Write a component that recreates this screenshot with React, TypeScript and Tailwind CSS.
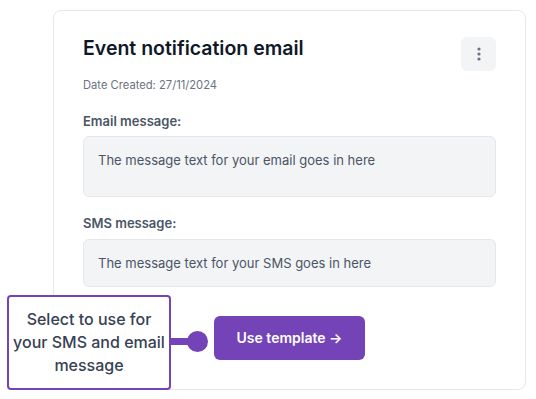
import React from 'react';

const font = { fontFamily: 'Inter, "Noto Sans", sans-serif' };

function KebabIcon() {
  return (
    <svg width="4" height="14" viewBox="0 0 4 14" fill="#6b7280">
      <circle cx="2" cy="2" r="1.6" />
      <circle cx="2" cy="7" r="1.6" />
      <circle cx="2" cy="12" r="1.6" />
    </svg>
  );
}

export default function App() {
  return (
    <div className="relative w-[536px] h-[399px] bg-white pt-[10px] pl-[53px]" style={font}>
      {/* Template card */}
      <div className="w-[473px] h-[380px] border border-gray-200 rounded-lg bg-white px-[29px] pt-[25px]">
        <div className="flex items-start justify-between">
          <h2 className="text-[19.5px] leading-6 font-semibold text-gray-900">Event notification email</h2>
          <button className="mt-px w-[35px] h-[34px] rounded-md bg-gray-100 flex items-center justify-center">
            <KebabIcon />
          </button>
        </div>
        <p className="mt-[6px] text-[11.2px] leading-4 text-gray-500">Date Created: 27/11/2024</p>

        <p className="mt-[18px] text-[13px] leading-5 font-semibold text-gray-600">Email message:</p>
        <div className="mt-[5px] h-[61px] rounded-md border border-gray-200 bg-gray-100 px-[14px] py-[13px] text-[13px] leading-5 text-gray-600">
          The message text for your email goes in here
        </div>

        <p className="mt-[16px] text-[13px] leading-5 font-semibold text-gray-600">SMS message:</p>
        <div className="mt-[6px] h-[48px] rounded-md border border-gray-200 bg-gray-100 px-[14px] py-[13px] text-[13px] leading-5 text-gray-600">
          The message text for your SMS goes in here
        </div>

        <button className="mt-[29px] ml-[131px] h-[44px] w-[151px] rounded-md bg-[#7443b7] text-sm font-semibold text-white">
          Use template →
        </button>
      </div>

      {/* Callout */}
      <div className="absolute left-[7px] top-[295px] w-[164px] h-[95px] rounded-[4px] border-2 border-[#7443b7] bg-white flex items-center justify-center text-center text-base leading-[23px] font-medium text-gray-700">
        Select to use for
        <br />
        your SMS and email
        <br />
        message
      </div>
      <div className="absolute left-[170px] top-[338px] w-[20px] h-[7px] bg-[#7443b7]" />
      <div className="absolute left-[187px] top-[331px] w-[21px] h-[21px] rounded-full bg-[#7443b7]" />
    </div>
  );
}
